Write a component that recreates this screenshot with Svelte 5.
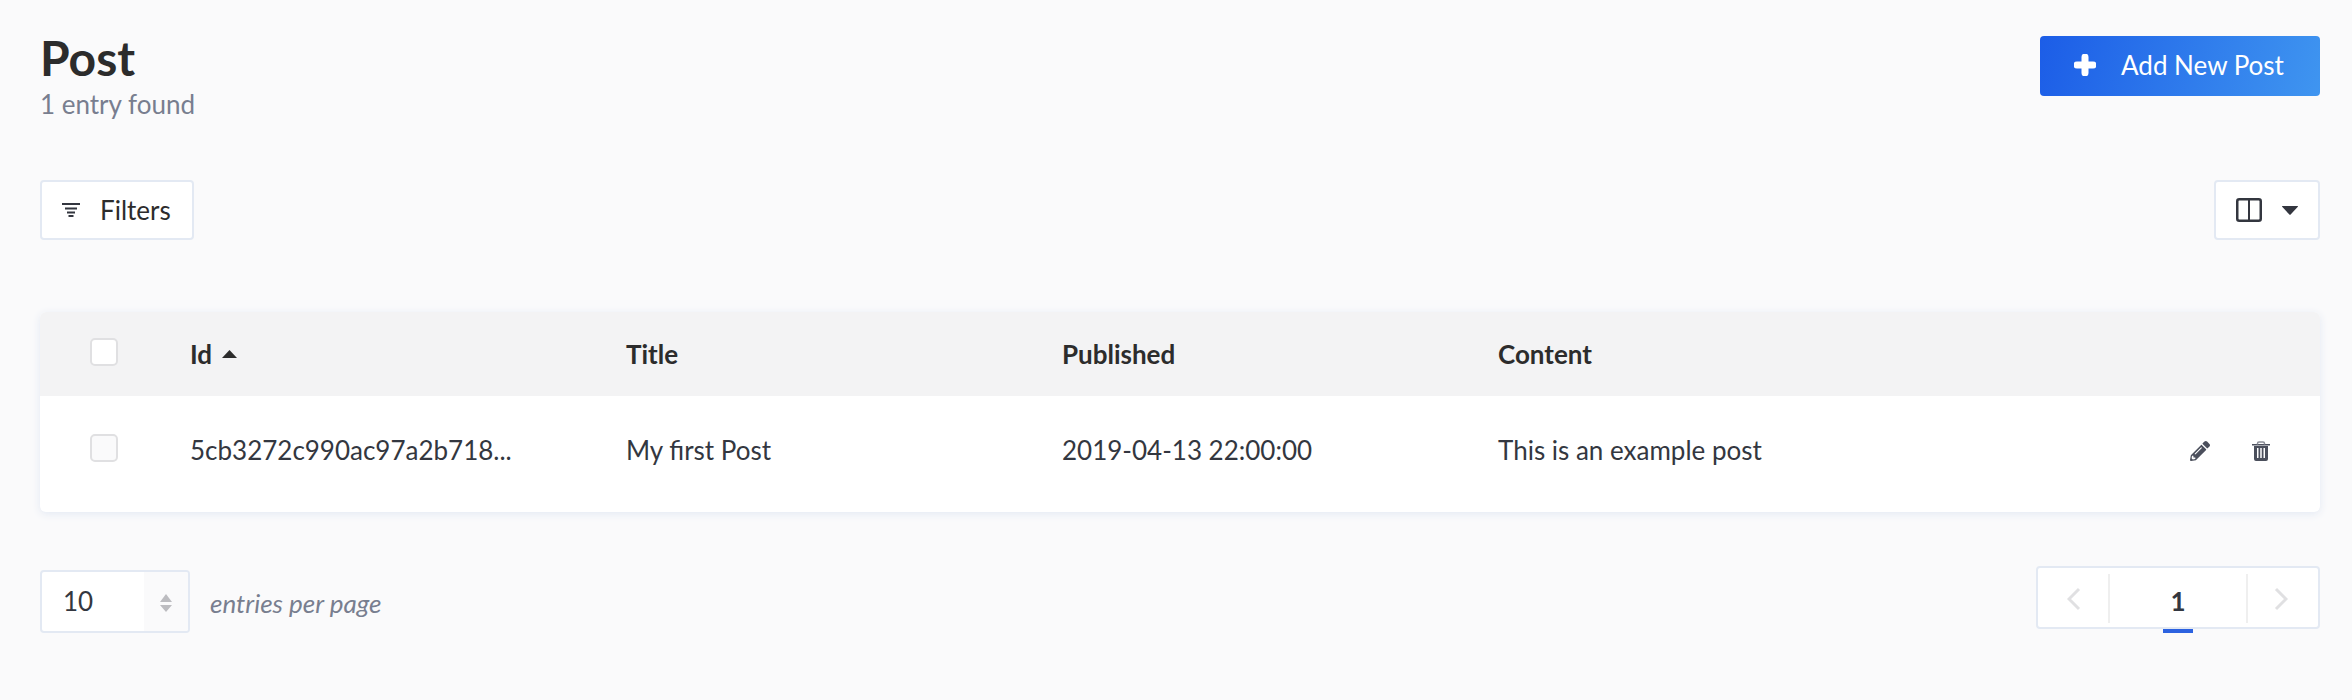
<script>
	const columns = [
		{ label: 'Id', sorted: true },
		{ label: 'Title' },
		{ label: 'Published' },
		{ label: 'Content' }
	];
	const row = ['5cb3272c990ac97a2b718...', 'My first Post', '2019-04-13 22:00:00', 'This is an example post'];
</script>

<main>
	<header class="head">
		<div>
			<h1>Post</h1>
			<p class="count">1 entry found</p>
		</div>
		<button class="add">
			<svg width="22" height="22" viewBox="0 0 22 22"><path d="M11 3v16M3 11h16" stroke="#fff" stroke-width="7" stroke-linecap="round" /></svg>
			<span>Add New Post</span>
		</button>
	</header>

	<div class="toolbar">
		<button class="outline filters">
			<svg width="18" height="14" viewBox="0 0 18 14"><path d="M0 1h18M3 5.5h12M5 9.500h8M6.500 13h5" stroke="#33363f" stroke-width="2" /></svg>
			<span>Filters</span>
		</button>
		<button class="outline cols" aria-label="Columns">
			<svg width="26" height="24" viewBox="0 0 26 24"><rect x="1.250" y="1.250" width="23.500" height="21.500" rx="2" fill="none" stroke="#33363f" stroke-width="2.500" /><path d="M13 1v22" stroke="#33363f" stroke-width="2" /></svg>
			<svg width="16" height="9" viewBox="0 0 16 9"><path d="M0.500 0h15a.5.5 0 0 1 .35.85L8.600 8.600a.8.8 0 0 1-1.200 0L.15.850A.5.5 0 0 1 .5 0z" fill="#33363f" /></svg>
		</button>
	</div>

	<section class="table">
		<div class="row thead">
			<div class="check"><span class="box"></span></div>
			{#each columns as col}
				<div class="th">
					{col.label}
					{#if col.sorted}
						<svg width="15" height="8" viewBox="0 0 15 8"><path d="M7.500 0L15 8H0z" fill="#2c2c2c" /></svg>
					{/if}
				</div>
			{/each}
		</div>
		<div class="row tbody">
			<div class="check"><span class="box empty"></span></div>
			{#each row as cell}
				<div class="td">{cell}</div>
			{/each}
			<div class="actions">
				<svg width="20" height="20" viewBox="0 0 512 512"><path fill="#4b4f5c" d="M497.900 142.100l-46.100 46.100c-4.700 4.700-12.300 4.700-17 0l-111-111c-4.700-4.700-4.700-12.300 0-17l46.100-46.100c18.700-18.700 49.100-18.700 67.900 0l60.100 60.100c18.800 18.700 18.800 49.100 0 67.900zM284.200 99.800L21.600 362.400.4 483.900c-2.900 16.400 11.400 30.600 27.800 27.800l121.500-21.300 262.600-262.600c4.700-4.700 4.700-12.300 0-17l-111-111c-4.800-4.700-12.400-4.700-17.100 0zM124.100 339.900c-5.500-5.500-5.500-14.300 0-19.800l154-154c5.500-5.500 14.300-5.500 19.800 0s5.500 14.300 0 19.800l-154 154c-5.500 5.500-14.300 5.500-19.800 0zM88 424h48v36.300l-64.500 11.300-31.100-31.100L51.700 376H88v48z" /></svg>
				<svg width="18" height="20" viewBox="0 0 18 20"><path fill="#4b4f5c" fill-rule="evenodd" d="M2 5h14v13a2 2 0 0 1-2 2H4a2 2 0 0 1-2-2zM5 7v10h1.500V7zM8.250 7v10h1.500V7zM11.500 7v10H13V7z" /><path fill="#4b4f5c" d="M0 3h18v1.500H0z" /><path d="M5.500 3.500V2.500q0-1.500 1.500-1.500h4q1.500 0 1.500 1.500v1" fill="none" stroke="#8b8e98" stroke-width="1.500" /></svg>
			</div>
		</div>
	</section>

	<footer class="foot">
		<div class="per-page">
			<div class="select">
				<span class="value">10</span>
				<span class="arrows">
					<svg width="12" height="18" viewBox="0 0 12 18"><path d="M6 0l6 8H0zM0 11h12l-6 7z" fill="#bcbcc0" /></svg>
				</span>
			</div>
			<em>entries per page</em>
		</div>
		<nav class="pager">
			<span class="nav prev"><svg width="14" height="24" viewBox="0 0 14 24"><path d="M12 2L2 12l10 10" fill="none" stroke="#e0e0e2" stroke-width="3" /></svg></span>
			<span class="page">1</span>
			<span class="nav next"><svg width="14" height="24" viewBox="0 0 14 24"><path d="M2 2l10 10L2 22" fill="none" stroke="#e0e0e2" stroke-width="3" /></svg></span>
		</nav>
	</footer>
</main>

<style>
	:global(body) {
		margin: 0;
		background: #fafafb;
	}

	main {
		box-sizing: border-box;
		height: 700px;
		padding: 36px 32px 0 40px;
		font-family: Lato, 'Open Sans', sans-serif;
		font-size: 26px;
		color: #2c2c2c;
		background: #fafafb;
	}

	.head {
		display: flex;
		justify-content: space-between;
		align-items: flex-start;
	}

	h1 {
		margin: -6px 0 0;
		font-size: 48px;
		line-height: 56px;
		font-weight: 700;
		color: #2c2c2c;
	}

	.count {
		margin: 2px 0 0;
		line-height: 32px;
		color: #787e8f;
	}

	button {
		box-sizing: border-box;
		display: flex;
		align-items: center;
		font: inherit;
		cursor: pointer;
	}

	.add {
		width: 280px;
		height: 60px;
		padding: 0 0 2px 34px;
		gap: 25px;
		border: 0;
		border-radius: 4px;
		color: #fff;
		background: linear-gradient(105deg, #1c5de7, #3f95f0);
	}

	.toolbar {
		display: flex;
		justify-content: space-between;
		margin-top: 60px;
	}

	.outline {
		height: 60px;
		border: 2px solid #e3e9f3;
		border-radius: 4px;
		background: #fff;
		color: #2c2c2c;
	}

	.filters {
		width: 154px;
		padding: 0 0 0 20px;
		gap: 20px;
	}

	.cols {
		width: 106px;
		padding: 0 0 0 20px;
		gap: 20px;
	}

	.table {
		margin-top: 72px;
		border-radius: 6px;
		overflow: hidden;
		background: #fff;
		box-shadow: 0 2px 8px #e3e9f3;
	}

	.row {
		display: grid;
		grid-template-columns: 150px 436px 436px 436px 1fr 130px;
		align-items: center;
	}

	.thead {
		height: 84px;
		background: #f3f3f4;
		font-weight: 700;
	}

	.tbody {
		height: 116px;
		align-items: start;
		color: #333740;
	}

	.check {
		display: flex;
		padding-left: 50px;
	}

	.thead .check {
		margin-top: -4px;
	}

	.tbody .check {
		padding-top: 38px;
	}

	.box {
		box-sizing: border-box;
		width: 28px;
		height: 28px;
		border: 2px solid #e0e0e2;
		border-radius: 5px;
		background: #fff;
	}

	.box.empty {
		background: #fafafb;
	}

	.th {
		display: flex;
		align-items: center;
		gap: 10px;
	}

	.thead .th:last-child {
		grid-column: 5;
	}

	.td {
		padding-top: 38px;
		line-height: 32px;
		white-space: nowrap;
	}

	.actions {
		display: flex;
		gap: 42px;
		padding-top: 45px;
	}

	.foot {
		display: flex;
		justify-content: space-between;
		align-items: flex-start;
		margin-top: 54px;
	}

	.per-page {
		display: flex;
		align-items: center;
		gap: 20px;
		margin-top: 4px;
	}

	.select {
		box-sizing: border-box;
		display: flex;
		width: 150px;
		height: 63px;
		border: 2px solid #e3e9f3;
		border-radius: 4px;
		background: #fff;
		overflow: hidden;
	}

	.value {
		flex: 1;
		padding: 13px 0 0 21px;
		line-height: 32px;
		color: #333740;
	}

	.arrows {
		display: flex;
		align-items: center;
		justify-content: center;
		width: 44px;
		padding-top: 3px;
		background: #fafafb;
	}

	.per-page em {
		padding-top: 2px;
		color: #787e8f;
	}

	.pager {
		box-sizing: border-box;
		display: grid;
		grid-template-columns: 72px 1fr 72px;
		width: 284px;
		height: 63px;
		padding: 6px 0;
		border: 2px solid #e3e9f3;
		border-radius: 4px;
		background: #fff;
	}

	.nav {
		display: flex;
		align-items: center;
		justify-content: center;
		height: 49px;
	}

	.prev {
		border-right: 2px solid #efefef;
		padding-left: 2px;
	}

	.next {
		border-left: 2px solid #efefef;
		padding-right: 4px;
	}

	.page {
		position: relative;
		text-align: center;
		line-height: 54px;
		font-weight: 700;
		color: #333740;
	}

	.page::after {
		content: '';
		position: absolute;
		left: 50%;
		bottom: -5px;
		width: 30px;
		height: 4px;
		margin-left: -15px;
		background: #2c62e0;
	}
</style>
